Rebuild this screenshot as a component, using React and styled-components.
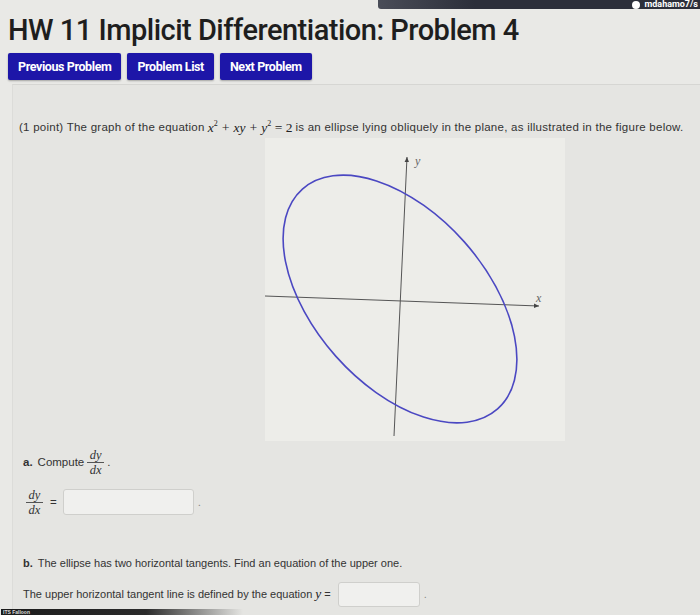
import React from 'react'
import styled, { createGlobalStyle } from 'styled-components'

const Global = createGlobalStyle`
  html, body { margin: 0; padding: 0; }
  body {
    width: 700px;
    height: 615px;
    overflow: hidden;
    background: #e9e9e6;
    font-family: "Liberation Sans", Arial, sans-serif;
    color: #2a2a2a;
  }
`

const Page = styled.div`
  display: flex;
  flex-direction: column;
  height: 615px;
`

const TopStrip = styled.div`
  display: flex;
  justify-content: flex-end;
  height: 9px;
`

const NavDark = styled.div`
  width: 320px;
  background: linear-gradient(90deg, #4a4d58, #2c2f3a 30%);
  border-bottom-left-radius: 3px;
  color: #fff;
  font-family: Roboto, "Liberation Sans", sans-serif;
  font-size: 9px;
  font-weight: 700;
  display: flex;
  align-items: flex-end;
  justify-content: flex-end;
  gap: 4px;
  padding-right: 2px;
  line-height: 9px;
  overflow: hidden;
`

const UserIcon = styled.span`
  width: 8px;
  height: 8px;
  border-radius: 50%;
  background: #fff;
  display: inline-block;
`

const Title = styled.h1`
  margin: 4px 0 0 8px;
  font-family: Roboto, "Liberation Sans", sans-serif;
  font-size: 29px;
  font-weight: 500;
  letter-spacing: -0.5px;
  color: #1e1e1e;
  line-height: 34px;
`

const ButtonRow = styled.div`
  display: flex;
  gap: 6px;
  margin: 6px 0 0 8px;
`

const NavButton = styled.button`
  background: #1d16a8;
  color: #fff;
  border: none;
  border-radius: 2px;
  height: 27px;
  padding: 0 10px;
  font-family: Roboto, "Liberation Sans", sans-serif;
  font-size: 12.5px;
  font-weight: 700;
  letter-spacing: -0.4px;
  box-shadow: 0 1px 2px rgba(0,0,0,0.3);
`

const Panel = styled.div`
  flex: 1;
  margin: 4px 0 0 12px;
  background: #e5e5e2;
  border-top: 1px solid #d6d6d3;
  border-left: 1px solid #dcdcd9;
  padding: 34px 0 0 6px;
  font-size: 11.5px;
  color: #333;
  position: relative;
`

const Line = styled.p`
  margin: 0;
  display: flex;
  align-items: center;
  white-space: nowrap;
  font-size: ${p => p.$fs || 11.5}px;
  letter-spacing: ${p => p.$ls || 0}px;
  padding-left: ${p => p.$indent || 0}px;
`

const M = styled.span`
  font-family: "Liberation Serif", "Times New Roman", serif;
  font-style: italic;
  font-size: 13.5px;
  letter-spacing: 0;
  color: #222;
  margin: 0 ${p => p.$gap || 0}px;
`

const Up = styled.span`
  font-style: normal;
`

const Sup = styled.sup`
  font-size: 8px;
  font-style: normal;
`

const Figure = styled.div`
  margin: 2px 0 0 246px;
  width: 300px;
  height: 303px;
  background: #edede9;
`

const Frac = styled.span`
  display: inline-flex;
  flex-direction: column;
  align-items: center;
  font-family: "Liberation Serif", "Times New Roman", serif;
  font-style: italic;
  font-size: 12.5px;
  line-height: 12px;
  color: #333;
  margin: 0 3px;
`

const Bar = styled.span`
  width: 17px;
  height: 1px;
  background: #555;
  margin: 1px 0;
`

const Input = styled.span`
  display: inline-block;
  width: ${p => p.$w}px;
  height: ${p => p.$h || 24}px;
  background: #f0f0ee;
  border: 1px solid #cfcfcc;
  border-radius: 3px;
  margin-left: ${p => p.$ml || 7}px;
`

const Dot = styled.span`
  margin-left: 4px;
  color: #888;
`

const Bold = styled.b`
  margin-right: 5px;
`

const Gap = styled.div`
  height: ${p => p.$h}px;
`

const BottomBar = styled.div`
  position: absolute;
  left: -12px;
  bottom: 0;
  width: 240px;
  height: 6px;
  background: linear-gradient(90deg, #1b1b1b, #2b2b2b 60%, rgba(60,60,60,0));
  color: #ddd;
  font-size: 5px;
  font-weight: 700;
  line-height: 6px;
  padding-left: 2px;
  overflow: hidden;
`

function EllipsePlot() {
  return (
    <svg width="300" height="303" viewBox="0 0 300 303">
      <defs>
        <marker id="ar" markerWidth="6" markerHeight="6" refX="5" refY="3" orient="auto">
          <path d="M0,0.8 L5,3 L0,5.2 Z" fill="#444" />
        </marker>
      </defs>
      <line x1="0" y1="158" x2="274" y2="168" stroke="#555" strokeWidth="1" markerEnd="url(#ar)" />
      <line x1="129" y1="298" x2="142" y2="19" stroke="#555" strokeWidth="1" markerEnd="url(#ar)" />
      <text x="150" y="27" fontFamily="Liberation Serif, serif" fontStyle="italic" fontSize="12" fill="#666">y</text>
      <text x="271" y="164" fontFamily="Liberation Serif, serif" fontStyle="italic" fontSize="12" fill="#666">x</text>
      <ellipse cx="135" cy="161" rx="147" ry="86" transform="rotate(48.4 135 161)" fill="none" stroke="#4b48c2" strokeWidth="1.6" />
    </svg>
  )
}

export default function App() {
  return (
    <Page>
      <Global />
      <TopStrip>
        <NavDark>
          <UserIcon />
          mdahamo7/s
        </NavDark>
      </TopStrip>
      <Title>HW 11 Implicit Differentiation: Problem 4</Title>
      <ButtonRow>
        <NavButton>Previous Problem</NavButton>
        <NavButton>Problem List</NavButton>
        <NavButton>Next Problem</NavButton>
      </ButtonRow>
      <Panel>
        <Line $ls={0.25}>
          (1 point) The graph of the equation
          <M $gap={3}>x<Sup>2</Sup> + xy + y<Sup>2</Sup> <Up>= 2</Up></M>
          is an ellipse lying obliquely in the plane, as illustrated in the figure below.
        </Line>
        <Figure>
          <EllipsePlot />
        </Figure>
        <Gap $h={8} />
        <Line $indent={4}>
          <Bold>a.</Bold> Compute
          <Frac>
            <span>dy</span>
            <Bar />
            <span>dx</span>
          </Frac>
          .
        </Line>
        <Gap $h={13} />
        <Line $indent={4}>
          <Frac>
            <span>dy</span>
            <Bar />
            <span>dx</span>
          </Frac>
          <span style={{ marginLeft: 4 }}>=</span>
          <Input $w={129} $ml={6} />
          <Dot>.</Dot>
        </Line>
        <Gap $h={41} />
        <Line $indent={4} $fs={11}>
          <Bold>b.</Bold> The ellipse has two horizontal tangents. Find an equation of the upper one.
        </Line>
        <Gap $h={13} />
        <Line $indent={4} $fs={11}>
          The upper horizontal tangent line is defined by the equation
          <M $gap={3}>y</M> =
          <Input $w={80} $h={23} />
          <Dot>.</Dot>
        </Line>
        <BottomBar>ITS Falloon</BottomBar>
      </Panel>
    </Page>
  )
}
